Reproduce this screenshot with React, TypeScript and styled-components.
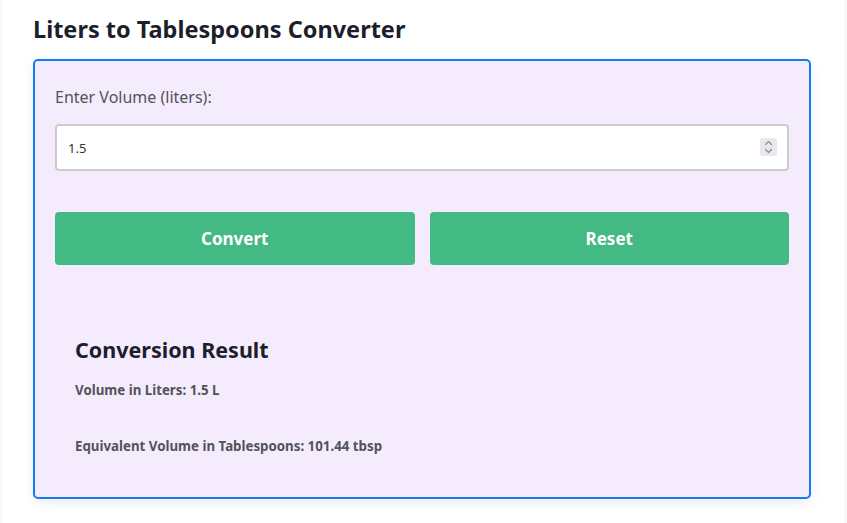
import React, { useState } from "react";
import styled, { createGlobalStyle } from "styled-components";

const Global = createGlobalStyle`
  html, body { margin: 0; padding: 0; }
  body {
    background: #f7f9fc;
    font-family: "Noto Sans", "Open Sans", sans-serif;
    color: #1f2230;
  }
`;

const Page = styled.div`
  max-width: 841px;
  margin: 0 auto;
  background: #ffffff;
  min-height: 523px;
  padding: 12px 33px 20px 30px;
  box-sizing: border-box;
`;

const Title = styled.h1`
  margin: 0 0 13px 0;
  font-size: 23.5px;
  line-height: 34px;
  font-weight: 700;
  color: #1c1f2b;
`;

const Card = styled.div`
  border: 2px solid #1479f5;
  border-radius: 5px;
  background: #f4ecfd;
  box-shadow: 0 4px 12px rgba(0, 0, 0, 0.08);
  padding: 20px;
  height: 440px;
  box-sizing: border-box;
`;

const Label = styled.label`
  display: block;
  font-size: 16px;
  line-height: 24px;
  font-weight: 400;
  color: #55525c;
  margin-top: 4px;
  margin-bottom: 15px;
`;

const InputWrap = styled.div`
  position: relative;
`;

const Input = styled.input`
  display: block;
  width: 100%;
  box-sizing: border-box;
  height: 47px;
  padding: 0 11px;
  border: 2px solid #cccccc;
  border-radius: 4px;
  background: #ffffff;
  font-family: inherit;
  font-size: 13px;
  color: #333;
  outline: none;
`;

const Spinner = styled.div`
  position: absolute;
  right: 12px;
  top: 14px;
  width: 17px;
  height: 18px;
  background: #e9e8ee;
  border-radius: 2px;
  display: flex;
  align-items: center;
  justify-content: center;
`;

const ButtonRow = styled.div`
  display: grid;
  grid-template-columns: 1fr 1fr;
  gap: 15px;
  margin-top: 41px;
`;

const Button = styled.button`
  height: 53px;
  border: none;
  border-radius: 4px;
  background: #43b983;
  color: #ffffff;
  font-family: inherit;
  font-size: 17px;
  font-weight: 700;
  cursor: pointer;
`;

const Result = styled.div`
  padding: 0 20px;
  margin-top: 70px;
`;

const ResultTitle = styled.h2`
  margin: 0 0 16px 0;
  font-size: 21.5px;
  line-height: 30px;
  font-weight: 700;
  color: #1c1f2b;
`;

const ResultLine = styled.p<{ $gap?: number }>`
  margin: 0 0 ${(p) => p.$gap ?? 0}px 0;
  font-size: 13.3px;
  line-height: 18px;
  font-weight: 700;
  color: #53525a;
`;

export default function App() {
  const [value, setValue] = useState("1.5");
  return (
    <>
      <Global />
      <Page>
        <Title>Liters to Tablespoons Converter</Title>
        <Card>
          <Label htmlFor="vol">Enter Volume (liters):</Label>
          <InputWrap>
            <Input id="vol" type="text" value={value} onChange={(e) => setValue(e.target.value)} />
            <Spinner>
              <svg width="9" height="14" viewBox="0 0 9 14" fill="none" stroke="#8d8c94" strokeWidth="1.2" strokeLinecap="round" strokeLinejoin="round">
                <path d="M1.5 4.5 L4.5 1.5 L7.5 4.5" />
                <path d="M1.5 9.5 L4.5 12.5 L7.5 9.5" />
              </svg>
            </Spinner>
          </InputWrap>
          <ButtonRow>
            <Button>Convert</Button>
            <Button>Reset</Button>
          </ButtonRow>
          <Result>
            <ResultTitle>Conversion Result</ResultTitle>
            <ResultLine $gap={38}>Volume in Liters: 1.5 L</ResultLine>
            <ResultLine>Equivalent Volume in Tablespoons: 101.44 tbsp</ResultLine>
          </Result>
        </Card>
      </Page>
    </>
  );
}
